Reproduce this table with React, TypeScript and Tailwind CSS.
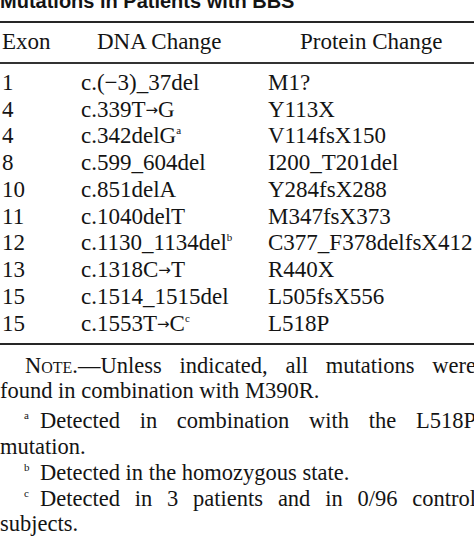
function Arrow() {
  return (
    <span className="relative -top-[2px] font-['DejaVu_Sans',sans-serif] text-[15px] leading-none">→</span>
  );
}

function Sup({ children }: { children: React.ReactNode }) {
  return (
    <span className="relative -top-[9px] text-[11px] leading-none">{children}</span>
  );
}

const rows: [string, React.ReactNode, string][] = [
  ["1", "c.(−3)_37del", "M1?"],
  ["4", <>c.339T<Arrow />G</>, "Y113X"],
  ["4", <>c.342delG<Sup>a</Sup></>, "V114fsX150"],
  ["8", "c.599_604del", "I200_T201del"],
  ["10", "c.851delA", "Y284fsX288"],
  ["11", "c.1040delT", "M347fsX373"],
  ["12", <>c.1130_1134del<Sup>b</Sup></>, "C377_F378delfsX412"],
  ["13", <>c.1318C<Arrow />T</>, "R440X"],
  ["15", "c.1514_1515del", "L505fsX556"],
  ["15", <>c.1553T<Arrow />C<Sup>c</Sup></>, "L518P"],
];

function Footnote({ mark, children }: { mark: string; children: React.ReactNode }) {
  return (
    <p className="text-justify indent-[24px]">
      <span className="inline-block w-[16px] indent-0 relative -top-[9px] text-[11px] leading-none">
        {mark}
      </span>
      {children}
    </p>
  );
}

export default function App() {
  return (
    <div className="w-[474px] h-[540px] overflow-hidden bg-white text-[#141414]">
      <div className="w-[476px] font-['Liberation_Serif',serif]">
        <h2 className="-mt-[9px] font-['Liberation_Sans',Arial,sans-serif] text-[20px] leading-[20px] font-bold whitespace-nowrap">
          Mutations in Patients with BBS
        </h2>

        <div className="mt-[10px] border-t-2 border-[#262626] text-[23px]">
          <div className="grid grid-cols-[79px_187px_1fr] pl-[2px] py-[6px] leading-[26.7px] border-b-2 border-[#333]">
            <div>Exon</div>
            <div className="pl-[16px]">DNA Change</div>
            <div className="pl-[32px]">Protein Change</div>
          </div>

          <div className="pt-[6px] pb-[5px] leading-[26.8px] border-b-2 border-[#262626]">
            {rows.map(([exon, dna, protein], i) => (
              <div key={i} className="grid grid-cols-[79px_187px_1fr] pl-[2px] whitespace-nowrap">
                <div>{exon}</div>
                <div>{dna}</div>
                <div>{protein}</div>
              </div>
            ))}
          </div>
        </div>

        <div className="pt-[8px] text-[22.5px] leading-[25.8px]">
          <p className="mb-[4px] text-justify indent-[25px]">
            <span className="[font-variant:small-caps]">Note</span>.—Unless indicated, all mutations were found in combination with M390R.
          </p>
          <Footnote mark="a">Detected in combination with the L518P mutation.</Footnote>
          <Footnote mark="b">Detected in the homozygous state.</Footnote>
          <Footnote mark="c">Detected in 3 patients and in 0/96 control subjects.</Footnote>
        </div>
      </div>
    </div>
  );
}
